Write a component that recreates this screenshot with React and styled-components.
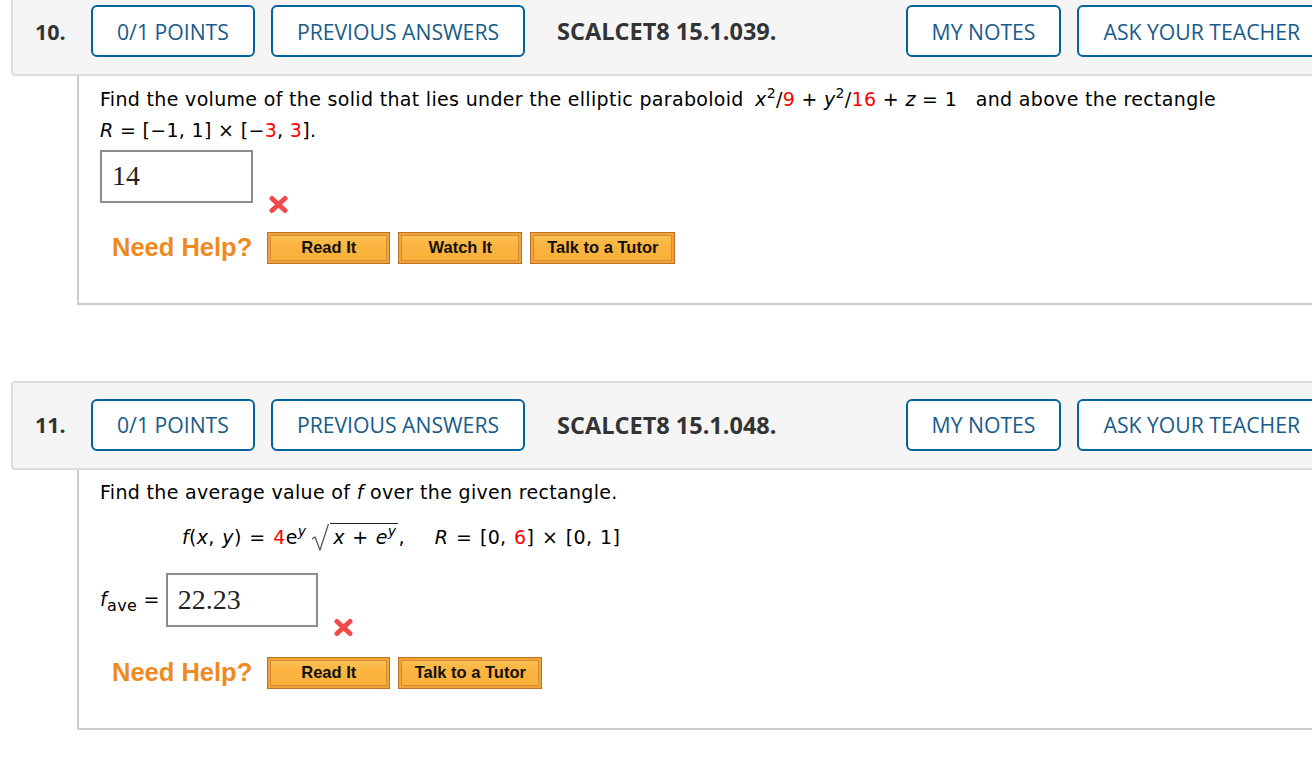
import styled, { createGlobalStyle } from 'styled-components';

const GlobalStyle = createGlobalStyle`
  html, body {
    margin: 0;
    padding: 0;
    background: #fff;
    overflow: hidden;
  }
`;

const Page = styled.div`
  width: 1334px;
  margin: -13px 0 0 11px;
`;

const Question = styled.section`
  margin-bottom: 76px;
`;

const Header = styled.div`
  display: flex;
  align-items: center;
  gap: 16px;
  background: #f5f5f5;
  border: 2px solid #dddddd;
  border-radius: 4px;
  padding: 16px 17px 17px 22px;
  font-family: "Open Sans", sans-serif;
`;

const Number = styled.div`
  font-size: 21.5px;
  font-weight: 700;
  color: #333;
  width: 36px;
  margin-right: 4px;
`;

const OutlineButton = styled.div`
  height: 48px;
  box-sizing: content-box;
  display: flex;
  align-items: center;
  justify-content: center;
  padding: 0 24px;
  border: 2px solid #02629c;
  border-radius: 6px;
  background: #fff;
  color: #175b8a;
  font-size: 21.2px;
  white-space: nowrap;
`;

const Title = styled.div`
  margin-left: 16px;
  flex: 1;
  font-size: 23.5px;
  font-weight: 700;
  color: #333;
`;

const Body = styled.div`
  margin-left: 66px;
  border-left: 2px solid #cccccc;
  border-bottom: 2px solid #cccccc;
  padding: 7.5px 0 39px 21px;
  font-family: "DejaVu Sans", Verdana, sans-serif;
  font-size: 19px;
  letter-spacing: 0.32px;
  color: #000;
`;

const Text = styled.div`
  line-height: 31px;
`;

const Red = styled.span`
  color: #ff0000;
`;

const Var = styled.i`
  font-style: italic;
`;

const Sup = styled.span`
  font-size: 14px;
  line-height: 0;
  vertical-align: 0.6em;
`;

const Sub = styled.span`
  font-size: 16px;
  line-height: 0;
  vertical-align: -0.3em;
`;

const Gap = styled.span`
  display: inline-block;
  width: ${p => p.w}px;
`;

const Formula = styled.div`
  margin: 11.5px 0 0 82px;
  line-height: 34px;
  white-space: nowrap;
  word-spacing: 1.3px;
`;

const RadicalSign = styled.svg`
  vertical-align: -7px;
  margin: 0 1px 0 5px;
`;

const Radicand = styled.span`
  display: inline-block;
  border-top: 1.5px solid #222;
  padding: 2px 2px 0 3px;
  line-height: 22px;
  word-spacing: 1px;
`;

const AnswerRow = styled.div`
  display: flex;
  align-items: flex-start;
  margin-top: ${p => p.top}px;
`;

const Label = styled.div`
  margin: 11px 6px 0 0;
  line-height: 31px;
`;

const AnswerBox = styled.div`
  border: 2px solid #8c8c8c;
  display: flex;
  align-items: center;
  padding-left: 10px;
  box-sizing: border-box;
  font-family: "Liberation Serif", "Times New Roman", serif;
  font-size: 28px;
  letter-spacing: 0;
  color: #222;
  width: ${p => p.w}px;
  height: ${p => p.h}px;
`;

const Wrong = styled.svg`
  flex-shrink: 0;
  margin: 45px 0 0 15px;
`;

const HelpRow = styled.div`
  display: flex;
  align-items: center;
  gap: 8px;
  margin: ${p => p.top}px 0 0 12px;
`;

const NeedHelp = styled.div`
  font-family: "Liberation Sans", Arial, sans-serif;
  font-weight: 700;
  font-size: 25.5px;
  letter-spacing: 0;
  color: #ee8a1e;
  margin-right: 7px;
`;

const HelpButton = styled.div`
  height: 32px;
  box-sizing: border-box;
  width: ${p => p.w}px;
  border: 1px solid #b8722a;
  background: linear-gradient(#fdc35a, #fbb540 40%, #f9b03a);
  box-shadow: inset 0 0 0 2px #f6a232, inset 0 0 0 3px #cf8c3c;
  display: flex;
  align-items: center;
  justify-content: center;
  font-family: "Liberation Sans", Arial, sans-serif;
  font-weight: 700;
  font-size: 16.5px;
  letter-spacing: 0;
  color: #111;
`;

const Cross = () => (
  <Wrong width="21" height="19" viewBox="0 0 21 19">
    <g stroke="#f14a4a" strokeWidth="5" strokeLinecap="round">
      <line x1="4" y1="3.5" x2="17" y2="15.5" />
      <line x1="17" y1="3.5" x2="4" y2="15.5" />
    </g>
  </Wrong>
);

const QuestionHeader = ({ num, code }) => (
  <Header>
    <Number>{num}.</Number>
    <OutlineButton>0/1 POINTS</OutlineButton>
    <OutlineButton>PREVIOUS ANSWERS</OutlineButton>
    <Title>{code}</Title>
    <OutlineButton>MY NOTES</OutlineButton>
    <OutlineButton>ASK YOUR TEACHER</OutlineButton>
  </Header>
);

export default function App() {
  return (
    <Page>
      <GlobalStyle />
      <Question>
        <QuestionHeader num="10" code="SCALCET8 15.1.039." />
        <Body>
          <Text>
            Find the volume of the solid that lies under the elliptic paraboloid <Gap w={5} />
            <Var>x</Var><Sup>2</Sup>/<Red>9</Red> + <Var>y</Var><Sup>2</Sup>/<Red>16</Red> + <Var>z</Var> = 1 <Gap w={6} /> and above the rectangle
            <br />
            <Var>R</Var> = [−1, 1] × [−<Red>3</Red>, <Red>3</Red>].
          </Text>
          <AnswerRow top={4}>
            <AnswerBox w={153} h={53}>14</AnswerBox>
            <Cross />
          </AnswerRow>
          <HelpRow top={18}>
            <NeedHelp>Need Help?</NeedHelp>
            <HelpButton w={123}>Read It</HelpButton>
            <HelpButton w={124}>Watch It</HelpButton>
            <HelpButton w={145}>Talk to a Tutor</HelpButton>
          </HelpRow>
        </Body>
      </Question>
      <Question>
        <QuestionHeader num="11" code="SCALCET8 15.1.048." />
        <Body>
          <Text>
            Find the average value of <Var>f</Var> over the given rectangle.
          </Text>
          <Formula>
            <Var>f</Var>(<Var>x</Var>, <Var>y</Var>) = <Red>4</Red>e<Sup><Var>y</Var></Sup>
            <RadicalSign width="18" height="28" viewBox="0 0 18 28">
              <path d="M1 16 L4 14 L9 27 L17.5 1" fill="none" stroke="#555" strokeWidth="1.3" />
            </RadicalSign>
            <Radicand>
              <Var>x</Var> + <Var>e</Var><Sup><Var>y</Var></Sup>
            </Radicand>
            ,<Gap w={30} />
            <Var>R</Var> = [0, <Red>6</Red>] × [0, 1]
          </Formula>
          <AnswerRow top={19}>
            <Label>
              <Var>f</Var><Sub>ave</Sub> =
            </Label>
            <AnswerBox w={152} h={54}>22.23</AnswerBox>
            <Cross />
          </AnswerRow>
          <HelpRow top={20}>
            <NeedHelp>Need Help?</NeedHelp>
            <HelpButton w={123}>Read It</HelpButton>
            <HelpButton w={144}>Talk to a Tutor</HelpButton>
          </HelpRow>
        </Body>
      </Question>
    </Page>
  );
}
